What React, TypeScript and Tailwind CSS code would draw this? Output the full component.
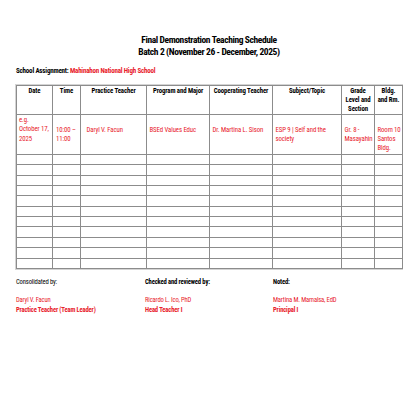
import React from "react";

const cols = [
  { label: ["Date"], w: "w-[36px]" },
  { label: ["Time"], w: "w-[28px]" },
  { label: ["Practice Teacher"], w: "w-[66px]" },
  { label: ["Program and Major"], w: "w-[63px]" },
  { label: ["Cooperating Teacher"], w: "w-[63px]" },
  { label: ["Subject/Topic"], w: "w-[69px]" },
  { label: ["Grade", "Level and", "Section"], w: "w-[33px]" },
  { label: ["Bldg.", "and Rm."], w: "w-[28px]" },
];

const sample = [
  { lines: ["e.g.", "October 17,", "2025"], cls: "pt-[1px] pl-[2px]" },
  { lines: ["10:00 –", "11:00"], cls: "pt-[10.5px] pl-[3px]" },
  { lines: ["Daryl V. Facun"], cls: "pt-[10.5px] pl-[5.5px]" },
  { lines: ["BSEd Values Educ"], cls: "pt-[10.5px] pl-[2.5px]" },
  { lines: ["Dr. Martina L. Sison"], cls: "pt-[10.5px] pl-[2.5px]" },
  { lines: ["ESP 9 | Self and the", "society"], cls: "pt-[10.5px] pl-[2.5px]" },
  { lines: ["Gr. 8 -", "Masayahin"], cls: "pt-[10.5px] pl-[2.5px]" },
  { lines: ["Room 10", "Santos", "Bldg."], cls: "pt-[10.5px] pl-[2.5px]" },
];

export default function App() {
  const emptyRows = Array.from({ length: 11 });
  return (
    <div className="w-[418px] h-[418px] bg-white text-black font-['Roboto_Condensed','Liberation_Sans',sans-serif]">
      <div className="pt-[34px] text-center font-bold text-[9.5px] leading-[12px] tracking-[-0.4px]">
        <div>Final Demonstration Teaching Schedule</div>
        <div>Batch 2 (November 26 - December, 2025)</div>
      </div>
      <div className="mt-[9px] ml-[16px] text-[7px] leading-[9px] font-bold tracking-[-0.2px]">
        School Assignment: <span className="text-[#e8202a]">Mahinahon National High School</span>
      </div>
      <div className="ml-[15px] mt-[8px] w-[388px] border border-[#d4d4d4]">
        <table className="table-fixed border-collapse w-full text-[6.8px] leading-[9px] tracking-[-0.1px]">
          <thead>
            <tr className="h-[27px]">
              {cols.map((c) => (
                <th key={c.label[0]} className={`${c.w} border border-[#8c8c8c] align-top font-bold text-center px-[1px] pt-[1px]`}>
                  {c.label.map((l) => (
                    <div key={l} className="whitespace-nowrap">{l}</div>
                  ))}
                </th>
              ))}
            </tr>
          </thead>
          <tbody>
            <tr className="h-[38px]">
              {sample.map((s, i) => (
                <td key={i} className={`border border-[#8c8c8c] align-top text-left text-[#e8202a] leading-[9.4px] pr-[1px] ${s.cls}`}>
                  {s.lines.map((l) => (
                    <div key={l} className="whitespace-nowrap">{l}</div>
                  ))}
                </td>
              ))}
            </tr>
            {emptyRows.map((_, r) => (
              <tr key={r} className="h-[10.4px]">
                {cols.map((c) => (
                  <td key={c.label[0]} className="border border-[#8c8c8c]" />
                ))}
              </tr>
            ))}
          </tbody>
        </table>
      </div>
      <div className="mt-[8px] ml-[16px] grid grid-cols-[129px_128px_1fr] text-[6.6px] leading-[9.4px] tracking-[-0.15px]">
        <div>
          <div>Consolidated by:</div>
          <div className="mt-[9px] text-[#e8202a]">Daryl V. Facun</div>
          <div className="font-bold text-[#e8202a]">Practice Teacher (Team Leader)</div>
        </div>
        <div>
          <div className="font-bold">Checked and reviewed by:</div>
          <div className="mt-[9px] text-[#e8202a]">Ricardo L. Ico, PhD</div>
          <div className="font-bold text-[#e8202a]">Head Teacher I</div>
        </div>
        <div>
          <div className="font-bold">Noted:</div>
          <div className="mt-[9px] text-[#e8202a]">Martina M. Mamalsa, EdD</div>
          <div className="font-bold text-[#e8202a]">Principal I</div>
        </div>
      </div>
    </div>
  );
}
